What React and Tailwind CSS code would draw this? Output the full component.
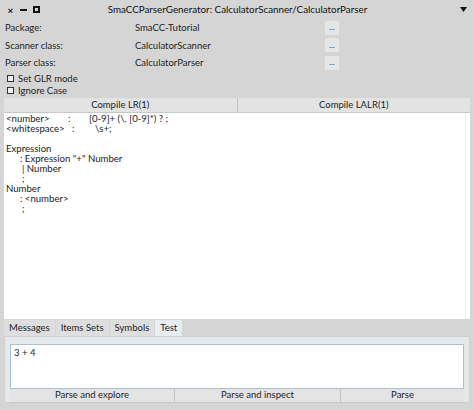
import React from "react";

const font = { fontFamily: "Lato, 'Noto Sans', sans-serif" };

function DotsBtn() {
  return (
    <div className="w-[14px] h-[14px] bg-[#e6e6e6] flex items-center justify-center text-[8px] leading-none text-[#333] pb-[1px]">
      ...
    </div>
  );
}

function Check({ label }) {
  return (
    <div className="flex items-center h-[12px] pl-[7px] gap-[4px]">
      <div className="w-[7px] h-[7px] border border-[#333] bg-[#f0f0f0]" />
      <span>{label}</span>
    </div>
  );
}

export default function App() {
  return (
    <div
      className="w-[474px] h-[410px] bg-[#d5d5d5] text-[#1e1e1e] text-[9.5px] leading-none flex flex-col overflow-hidden"
      style={font}
    >
      {/* title bar */}
      <div className="h-[19px] flex items-center px-[7px]">
        <div className="flex items-center gap-[6px] text-[#111] w-[40px]">
          <span className="text-[10px] font-bold w-[7px] text-center">×</span>
          <span className="w-[7px] h-[2px] bg-[#111] inline-block" />
          <span className="w-[7px] h-[7px] border-[2px] border-[#111] inline-block" />
        </div>
        <div className="flex-1 text-center text-[9.8px] text-[#111] pr-[32px]">
          SmaCCParserGenerator: CalculatorScanner/CalculatorParser
        </div>
        <svg width="7" height="5" viewBox="0 0 7 5">
          <path d="M0 0 L7 0 L3.5 5 Z" fill="#111" />
        </svg>
      </div>

      {/* form rows */}
      <div className="flex flex-col pl-[5px]">
        {[
          ["Package:", "SmaCC-Tutorial"],
          ["Scanner class:", "CalculatorScanner"],
          ["Parser class:", "CalculatorParser"],
        ].map(([l, v]) => (
          <div key={l} className="flex items-center h-[17.5px]">
            <span className="w-[130px]">{l}</span>
            <span className="w-[190px]">{v}</span>
            <DotsBtn />
          </div>
        ))}
      </div>

      <div className="flex flex-col pt-[1px]">
        <Check label="Set GLR mode" />
        <Check label="Ignore Case" />
      </div>

      {/* compile buttons */}
      <div className="mt-[1px] mx-[4px] flex h-[15px] bg-[#e3e3e3] border-b border-[#c8c8c8]">
        <div className="flex-1 flex items-center justify-center border-r border-[#c4c4c4]">
          Compile LR(1)
        </div>
        <div className="flex-1 flex items-center justify-center">Compile LALR(1)</div>
      </div>

      {/* editor */}
      <div className="mx-[4px] h-[206px] bg-white flex">
        <div className="flex-1 pt-[1px] pl-[2px] text-[9.6px] leading-[10px] text-[#222]">
          <div className="flex">
            <span className="w-[62px]">&lt;number&gt;</span>
            <span className="w-[21px]">:</span>
            <span>[0-9]+ (\. [0-9]*) ? ;</span>
          </div>
          <div className="flex">
            <span className="w-[66px]">&lt;whitespace&gt;</span>
            <span className="w-[23px]">:</span>
            <span>\s+;</span>
          </div>
          <div className="h-[10px]" />
          <div>Expression</div>
          <div className="pl-[14px]">: Expression "+" Number</div>
          <div className="pl-[16px]">| Number</div>
          <div className="pl-[16px]">;</div>
          <div>Number</div>
          <div className="pl-[14px]">: &lt;number&gt;</div>
          <div className="pl-[16px]">;</div>
        </div>
        <div className="w-[5px] border-l border-[#eeeeee]" />
      </div>

      {/* tabs */}
      <div className="mt-[1px] mx-[4px] flex h-[16px] gap-[1px]">
        {["Messages", "Items Sets", "Symbols", "Test"].map((t) => (
          <div
            key={t}
            className={
              "flex items-center px-[5px] " +
              (t === "Test" ? "bg-[#e8edf3]" : "bg-[#dedede]")
            }
          >
            {t}
          </div>
        ))}
      </div>

      {/* panel */}
      <div className="mx-[4px] h-[67px] bg-[#e6e8ea] border border-[#d0d0d0] pt-[7px] px-[5px]">
        <div className="h-[45px] bg-white border border-[#a9bfd8] pl-[3px] pt-[3px] text-[9.5px]">
          3 + 4
        </div>
        <div className="flex h-[14px] bg-[#e4e4e4] border-b border-[#c8c8c8]">
          <div className="w-[165px] flex items-center justify-center border-r border-[#c4c4c4]">
            Parse and explore
          </div>
          <div className="w-[166px] flex items-center justify-center border-r border-[#c4c4c4]">
            Parse and inspect
          </div>
          <div className="flex-1 flex items-center justify-center">Parse</div>
        </div>
      </div>
    </div>
  );
}
